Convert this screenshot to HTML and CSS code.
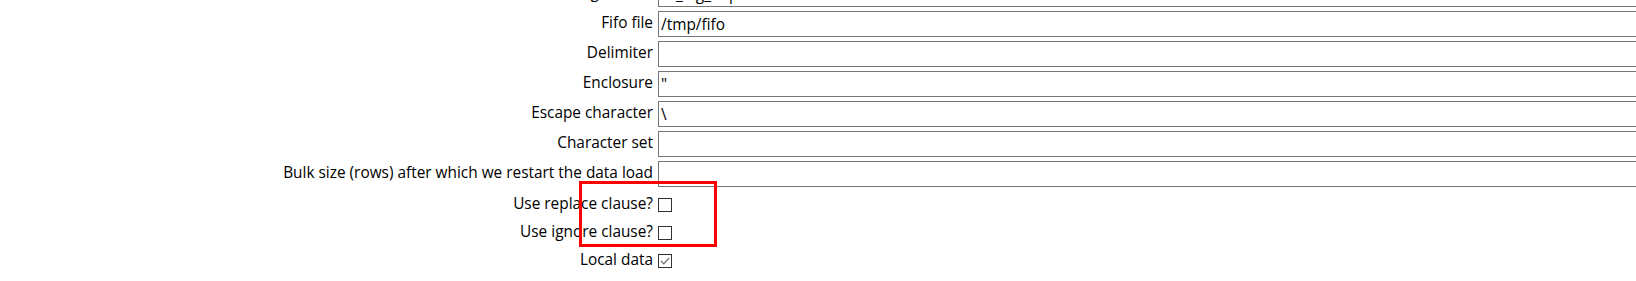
FILE: index.html
```html
<!DOCTYPE html>
<html lang="en">
<head>
  <meta charset="UTF-8">
  <title>MySQL bulk loader</title>
  <link rel="stylesheet" href="styles.css">
</head>
<body>
<div class="loader-form">
  <div class="row">
    <label class="row-label">Target table</label>
    <input class="row-input" type="text" value="tb_log_imp">
  </div>
  <div class="row">
    <label class="row-label">Fifo file</label>
    <input class="row-input" type="text" value="/tmp/fifo">
  </div>
  <div class="row">
    <label class="row-label">Delimiter</label>
    <input class="row-input" type="text" value="">
  </div>
  <div class="row">
    <label class="row-label">Enclosure</label>
    <input class="row-input" type="text" value="&quot;">
  </div>
  <div class="row">
    <label class="row-label">Escape character</label>
    <input class="row-input" type="text" value="\">
  </div>
  <div class="row">
    <label class="row-label">Character set</label>
    <input class="row-input" type="text" value="">
  </div>
  <div class="row">
    <label class="row-label">Bulk size (rows) after which we restart the data load</label>
    <input class="row-input" type="text" value="">
  </div>

  <div class="options">
    <div class="row row-check">
      <label class="row-label">Use replace clause?</label>
      <span class="check-box"></span>
    </div>
    <div class="row row-check">
      <label class="row-label">Use ignore clause?</label>
      <span class="check-box"></span>
    </div>
    <div class="highlight"></div>
  </div>
  <div class="row row-check">
    <label class="row-label">Local data</label>
    <span class="check-box">
      <svg width="14" height="14" viewBox="0 0 14 14"><polyline points="3,7 5.8,9.8 11,4" fill="none" stroke="#6d6d6d" stroke-width="1.2"/></svg>
    </span>
  </div>
</div>

<h4 class="section-title">Fields to load</h4>
</body>
</html>
```

FILE: styles.css
```css
body {
  margin: 0;
  overflow: hidden;
  background: #fff;
  color: #000;
  font-family: "Open Sans", "Noto Sans", sans-serif;
  font-size: 15.4px;
}

.loader-form {
  margin-top: -21px;
  display: flex;
  flex-direction: column;
}

.row {
  display: flex;
  align-items: center;
  height: 30px;
}

.row-label {
  flex-shrink: 0;
  width: 658px;
  text-align: right;
  white-space: nowrap;
  padding-right: 5px;
  box-sizing: border-box;
  line-height: 20px;
  margin-top: -3px;
}

.row-input {
  flex-shrink: 0;
  width: 1100px;
  height: 26px;
  box-sizing: border-box;
  border: 1px solid #767676;
  padding: 0 2px;
  margin: 0;
  font-family: inherit;
  font-size: 15.4px;
  color: #000;
  outline: none;
}

.options {
  position: relative;
}

.row-check {
  height: 28px;
}

.row-check .row-label {
  margin-top: 2px;
}

.check-box {
  flex-shrink: 0;
  display: block;
  width: 14px;
  height: 14px;
  box-sizing: border-box;
  border: 1px solid #333;
  background: #fff;
  margin-top: 3px;
}

.check-box svg {
  display: block;
  margin: -1px;
}

.highlight {
  position: absolute;
  left: 579px;
  top: -8px;
  width: 138px;
  height: 66px;
  box-sizing: border-box;
  border: 3px solid #f00;
}

.section-title {
  margin: 6px 0 0 0;
  font-size: 16px;
  font-weight: bold;
  color: #000;
}
```
